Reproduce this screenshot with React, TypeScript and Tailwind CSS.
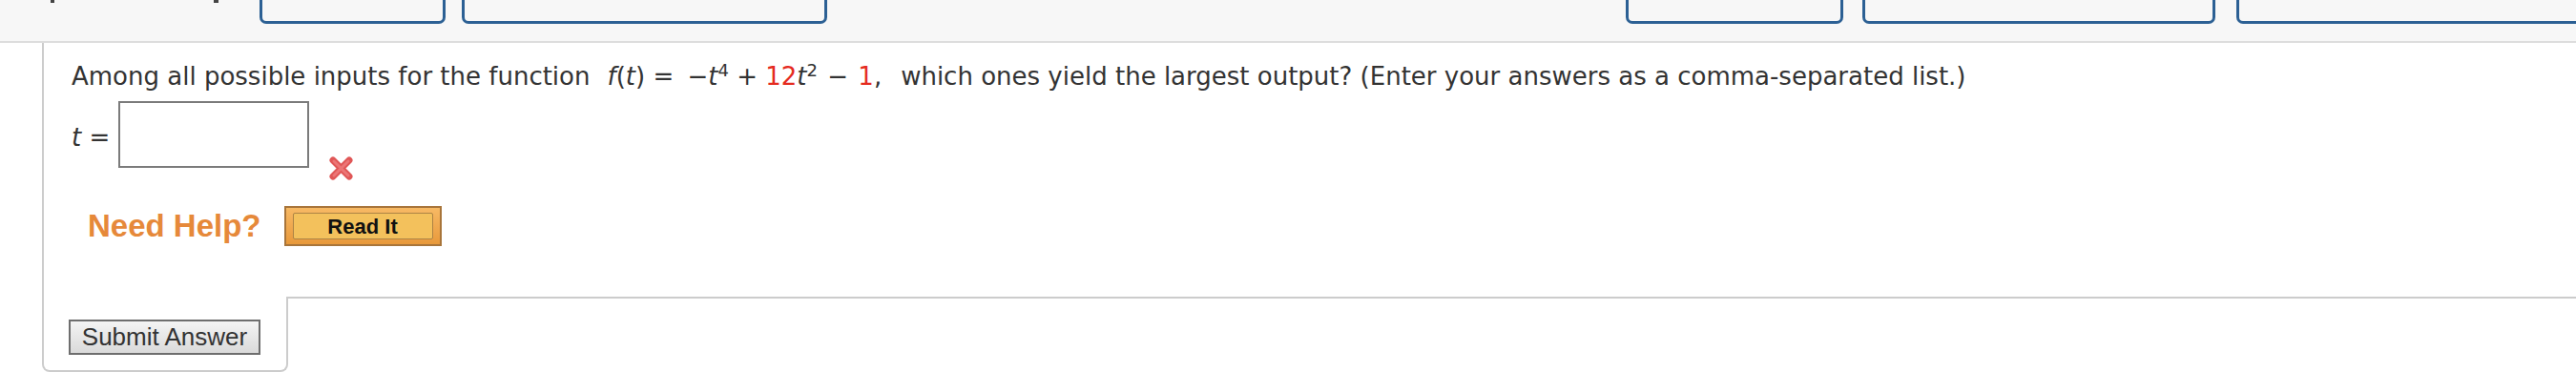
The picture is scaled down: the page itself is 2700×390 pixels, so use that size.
import React from 'react';

const Red = ({ children }: { children: React.ReactNode }) => (
    <span className="text-[#e52b1f]">{children}</span>
);

export default function App() {
    return (
        <div className="w-[2700px] h-[390px] bg-white overflow-hidden font-['DejaVu_Sans',sans-serif] text-[#333]">
            {/* top strip with the question navigation tabs */}
            <div className="h-[45px] bg-[#f7f7f7] border-b-2 border-[#dddddd] flex items-start">
                <div className="ml-[53px] w-[4px] h-[3px] shrink-0 bg-[#444]" />
                <div className="ml-[167px] w-[5px] h-[3px] shrink-0 bg-[#444]" />
                <div className="w-[195px] ml-[43px] h-[25px] shrink-0 border-[3px] border-t-0 border-[#2c6094] rounded-b-[7px]" />
                <div className="w-[383px] ml-[17px] h-[25px] shrink-0 border-[3px] border-t-0 border-[#2c6094] rounded-b-[7px]" />
                <div className="w-[228px] ml-[837px] h-[25px] shrink-0 border-[3px] border-t-0 border-[#2c6094] rounded-b-[7px]" />
                <div className="w-[370px] ml-[20px] h-[25px] shrink-0 border-[3px] border-t-0 border-[#2c6094] rounded-b-[7px]" />
                <div className="w-[420px] ml-[22px] h-[25px] shrink-0 border-[3px] border-t-0 border-[#2c6094] rounded-b-[7px]" />
            </div>

            <div className="ml-[44px] flex flex-col">
                <div className="h-[266px] border-l-2 border-[#cccccc] pl-[29px] pt-[20px]">
                    <p className="text-[26px] leading-[30px] whitespace-nowrap">
                        Among all possible inputs for the function
                        <span className="ml-[18px]">
                            <i>f</i>(<i>t</i>) <span className="mr-[6px]">=</span> −<i>t</i>
                            <sup className="text-[18px]">4</sup>
                            <span> + </span>
                            <Red>12</Red><i>t</i>
                            <sup className="text-[18px]">2</sup>
                            <span className="mx-[2px]"> − </span>
                            <Red>1</Red>,
                        </span>
                        <span className="ml-[20px]">which ones yield the largest output? (Enter your answers as a comma-separated list.)</span>
                    </p>

                    <div className="mt-[11px] flex items-start">
                        <div className="h-[70px] flex items-center text-[26px] leading-[30px] pt-[5px]">
                            <i>t</i>&nbsp;=
                        </div>
                        <div className="ml-[9px] w-[200px] h-[70px] border-2 border-[#7b7b7b] bg-white" />
                        <svg className="ml-[20px] mt-[57px]" width="27" height="27" viewBox="0 0 27 27">
                            <path d="M5 5 L22 22 M22 5 L5 22" stroke="#e05656" strokeWidth="7" strokeLinecap="round" />
                            <path d="M6 6 L21 21 M21 6 L6 21" stroke="#ec7676" strokeWidth="3" strokeLinecap="round" />
                        </svg>
                    </div>

                    <div className="mt-[26px] ml-[17px] flex items-center font-['Liberation_Sans',Arial,sans-serif]">
                        <span className="text-[33px] leading-[38px] font-bold text-[#e6893a]">Need Help?</span>
                        <button className="ml-[24px] w-[165px] h-[42px] border-2 border-[#a8753a] bg-gradient-to-b from-[#f7b964] to-[#e8993a] px-[7px] py-[5px]">
                            <div className="h-full w-full border-[1.5px] border-[#ad8345] rounded-[2px] bg-[#f3c15c] flex items-center justify-center text-[22px] font-bold text-[#111]">
                                Read It
                            </div>
                        </button>
                    </div>
                </div>

                <div className="h-[79px] flex">
                    <div className="w-[258px] shrink-0 border-2 border-t-0 border-[#cccccc] rounded-b-[8px] pl-[26px] pt-[24px]">
                        <button className="w-[201px] h-[37px] border-2 border-[#6e6e6e] bg-gradient-to-b from-[#f4f4f4] to-[#dadada] font-['Liberation_Sans',Arial,sans-serif] text-[26px] leading-[33px] text-[#333]">
                            Submit Answer
                        </button>
                    </div>
                    <div className="flex-1 border-t-2 border-[#cccccc]" />
                </div>
            </div>
        </div>
    );
}
